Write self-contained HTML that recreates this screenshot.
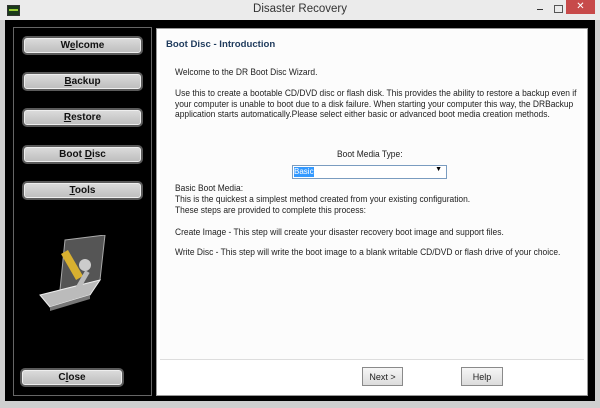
<!DOCTYPE html>
<html><head><style>
body{margin:0;width:600px;height:408px;background:#000;position:relative;overflow:hidden;font-family:"Liberation Sans",sans-serif;}
.abs{position:absolute}
.tb{left:0;top:0;width:600px;height:20px;background:#ebebeb;}
.btn{position:absolute;left:22px;width:121px;height:19px;border-radius:5px;background:linear-gradient(#dcdcdc,#bdbdbd);border:2px solid #5a5a5a;box-sizing:border-box;box-shadow:inset 0 0 0 1px #eee;font-weight:bold;font-size:10px;text-align:center;line-height:15px;color:#111}
.t{position:absolute;left:175px;font-size:9.6px;color:#222;white-space:nowrap;transform:scaleX(0.88);transform-origin:0 0}
.pb{position:absolute;height:19px;border:1px solid #8a8a8a;background:linear-gradient(#f6f6f6,#dcdcdc);font-size:9px;text-align:center;line-height:18px;box-sizing:border-box;color:#222}
</style></head><body>
<div class="abs tb"></div>
<div class="abs" style="left:7px;top:5px;width:11px;height:9px;background:#1a3a1a;border:1px solid #333"><div style="margin:3px 1px;height:2px;background:#9c3"></div></div>
<div class="abs" style="left:0;top:3px;width:600px;text-align:center;font-size:11.5px;color:#333">Disaster Recovery</div>
<div class="abs" style="left:537px;top:9px;width:6px;height:1px;background:#333"></div>
<div class="abs" style="left:554px;top:5px;width:7px;height:6px;border:1px solid #555"></div>
<div class="abs" style="left:566px;top:0;width:29px;height:14px;background:#c74a4a;color:#fff;font-size:10px;text-align:center;line-height:14px">✕</div>
<div class="abs" style="left:0;top:20px;width:5px;height:388px;background:#cfcfcf"></div>
<div class="abs" style="left:595px;top:20px;width:5px;height:388px;background:#cfcfcf"></div>
<div class="abs" style="left:0;top:401px;width:600px;height:7px;background:#cfcfcf"></div>
<div class="abs" style="left:13px;top:27px;width:139px;height:369px;border:1px solid #666;box-sizing:border-box"></div>
<div class="btn" style="top:36px">W<u>e</u>lcome</div>
<div class="btn" style="top:72px"><u>B</u>ackup</div>
<div class="btn" style="top:108px"><u>R</u>estore</div>
<div class="btn" style="top:145px">Boot <u>D</u>isc</div>
<div class="btn" style="top:181px"><u>T</u>ools</div>
<svg class="abs" style="left:35px;top:235px" width="80" height="100">
<polygon points="30,5 70,0 65,45 25,55" fill="#555" stroke="#aaa"/>
<polygon points="5,60 25,55 65,45 55,60 15,72" fill="#bbb" stroke="#eee"/>
<polygon points="15,72 55,60 55,64 15,76" fill="#777"/>
<rect x="33" y="15" width="8" height="30" fill="#d8b030" transform="rotate(-30 37 30)"/>
<circle cx="50" cy="30" r="6" fill="#ccc"/>
<rect x="45" y="35" width="5" height="22" fill="#bbb" transform="rotate(30 47 45)"/>
</svg>
<div class="btn" style="top:368px;left:20px;width:104px;height:19px">C<u>l</u>ose</div>
<div class="abs" style="left:156px;top:28px;width:432px;height:368px;background:#fff;border:1px solid #999;box-sizing:border-box"></div>
<div class="abs" style="left:160px;top:30px;width:424px;height:329px;border-bottom:1px solid #ddd;background:#fcfcfc"></div>
<div class="abs" style="left:166px;top:39px;font-size:9.6px;font-weight:bold;color:#1e3a5c">Boot Disc - Introduction</div>
<div class="t" style="top:67px">Welcome to the DR Boot Disc Wizard.</div>
<div class="t" style="top:88px">Use this to create a bootable CD/DVD disc or flash disk. This provides the ability to restore a backup even if</div>
<div class="t" style="top:98.5px">your computer is unable to boot due to a disk failure. When starting your computer this way, the DRBackup</div>
<div class="t" style="top:109px">application starts automatically.Please select either basic or advanced boot media creation methods.</div>
<div class="t" style="top:149px;left:337px">Boot Media Type:</div>
<div class="abs" style="left:292px;top:165px;width:155px;height:14px;border:1px solid #7a9cc0;box-sizing:border-box;background:#fff"><span style="position:absolute;left:1px;top:1px;height:10px;width:20px;background:#3399ff;color:#fff;font-size:8px;line-height:10px">Basic</span><span style="position:absolute;right:4px;top:0;font-size:7px">▼</span></div>
<div class="t" style="top:183px">Basic Boot Media:</div>
<div class="t" style="top:194px">This is the quickest a simplest method created from your existing configuration.</div>
<div class="t" style="top:205px">These steps are provided to complete this process:</div>
<div class="t" style="top:227px">Create Image - This step will create your disaster recovery boot image and support files.</div>
<div class="t" style="top:247px">Write Disc - This step will write the boot image to a blank writable CD/DVD or flash drive of your choice.</div>
<div class="pb" style="left:362px;top:367px;width:41px">Next &gt;</div>
<div class="pb" style="left:461px;top:367px;width:42px">Help</div>
</body></html>
